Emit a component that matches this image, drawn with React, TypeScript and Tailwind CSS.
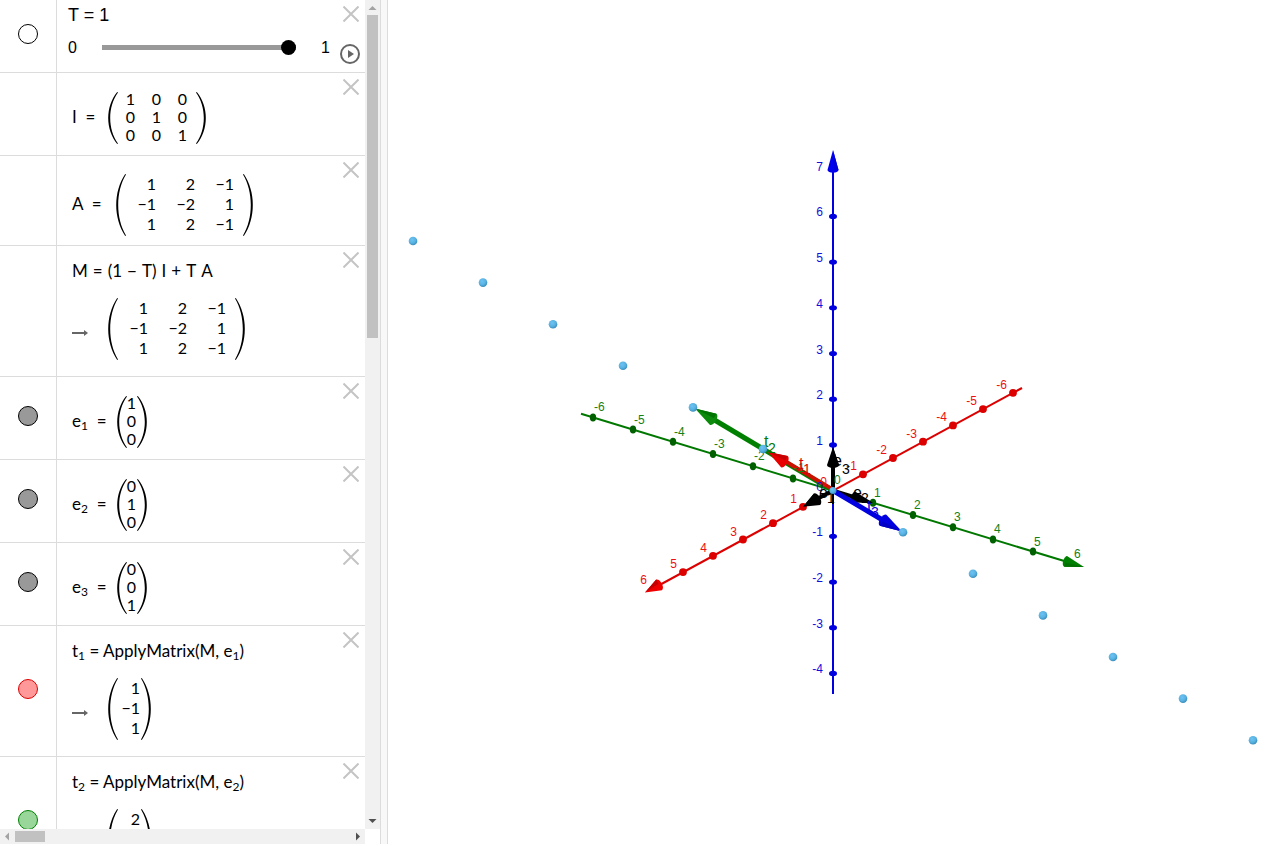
import React from "react";

const ParenLeft = () => (
  <svg
    className="w-[10px] self-stretch"
    viewBox="0 0 10 60"
    preserveAspectRatio="none"
    aria-hidden="true"
  >
    <path d="M9.2 0 C-2.8 17 -2.8 43 9.2 60 L10 59.4 C-0.4 43 -0.4 17 10 0.6 Z" />
  </svg>
);

const ParenRight = () => (
  <svg
    className="w-[10px] self-stretch"
    viewBox="0 0 10 60"
    preserveAspectRatio="none"
    aria-hidden="true"
  >
    <path d="M0.8 0 C12.8 17 12.8 43 0.8 60 L0 59.4 C10.4 43 10.4 17 0 0.6 Z" />
  </svg>
);

const matrixStyles = {
  identity: "grid grid-cols-[8px_8px_8px] gap-x-[18px] px-[9px] pb-[2px] leading-[18px]",
  wide: "grid grid-cols-[21px_21px_21px] gap-x-[18px] px-[9px] pb-[2px] leading-[20px]",
  vector: "grid grid-cols-[8px] px-px pb-[2px] leading-[18px]",
  image: "grid grid-cols-[21px] px-px pb-[2px] leading-[20px]",
};

type MatrixProps = {
  kind: keyof typeof matrixStyles;
  cells: string[];
};

const Matrix = ({ kind, cells }: MatrixProps) => {
  const tall = kind === "wide" || kind === "image";
  return (
    <div
      className={
        tall
          ? "flex h-[62px] items-center text-[16px]"
          : "flex h-[52px] items-center text-[16px]"
      }
    >
      <ParenLeft />
      <div className={matrixStyles[kind]}>
        {cells.map((cell, i) => (
          <span key={i} className="flex justify-end whitespace-nowrap">
            {cell}
          </span>
        ))}
      </div>
      <ParenRight />
    </div>
  );
};

const Sub = ({ children }: { children: React.ReactNode }) => (
  <sub className="text-[12px]">{children}</sub>
);

const Arrow = () => (
  <svg className="mt-2 h-[8px] w-[16px]" viewBox="0 0 16 8" aria-hidden="true">
    <path d="M0 4H13" stroke="#666" strokeWidth="2" />
    <path d="M12 1L16 4L12 7Z" fill="#666" />
  </svg>
);

type RowProps = {
  name: string;
  height: string;
  marker?: string;
  action?: React.ReactNode;
  children: React.ReactNode;
};

const Row = ({ name, height, marker, action, children }: RowProps) => (
  <li className={`flex shrink-0 border-b border-[#dcdcdc] ${height}`}>
    <div className="flex w-[57px] shrink-0 items-center justify-center border-r border-[#dcdcdc] pb-1">
      {marker && (
        <button
          type="button"
          aria-label={`Show or hide ${name}`}
          className={`size-5 rounded-full border ${marker}`}
        />
      )}
    </div>
    <div className="min-w-0 flex-1">{children}</div>
    <div className="flex w-6 shrink-0 flex-col items-center gap-[22px] pt-[6px] pr-1">
      <button type="button" aria-label={`Delete ${name}`}>
        <svg className="block size-4" viewBox="0 0 16 16" aria-hidden="true">
          <path d="M0.5 0.5L15.5 15.5M15.5 0.5L0.5 15.5" stroke="#c4c4c4" strokeWidth="2" />
        </svg>
      </button>
      {action}
    </div>
  </li>
);

const Play = () => (
  <button type="button" aria-label="Play">
    <svg className="block h-5 w-[22px]" viewBox="1 0 22 20" aria-hidden="true">
      <circle cx="11" cy="10" r="9" fill="none" stroke="#666" strokeWidth="2" />
      <path d="M9 6L15 10L9 14Z" fill="#666" />
    </svg>
  </button>
);

const greyMarker = "border-black bg-[#999999]";

const unitVectors = [
  { index: "1", cells: ["1", "0", "0"] },
  { index: "2", cells: ["0", "1", "0"] },
  { index: "3", cells: ["0", "0", "1"] },
];

const imageVectors = [
  { index: "1", marker: "border-[#dd0000] bg-[#ff9999]", cells: ["1", "−1", "1"] },
  { index: "2", marker: "border-[#008000] bg-[#99d699]", cells: ["2", "−2", "2"] },
];

const matrixA = ["1", "2", "−1", "−1", "−2", "1", "1", "2", "−1"];

const AlgebraList = () => (
  <ul className="flex min-h-0 min-w-0 flex-1 flex-col overflow-hidden font-['Lato',sans-serif] text-[17px]">
    <Row name="T" height="h-[73px]" marker="border-black bg-white" action={<Play />}>
      <div className="pl-[11px] font-['Liberation_Sans',sans-serif]">
        <label htmlFor="slider-t" className="block pt-1 text-[18px] leading-[22px]">
          T = 1
        </label>
        <div className="flex items-center pt-[11px] text-[16px] leading-[21px]">
          <span className="w-[34px]">0</span>
          <input
            id="slider-t"
            type="range"
            min={0}
            max={1}
            step={0.01}
            defaultValue={1}
            className="h-[5px] min-w-0 flex-1 appearance-none bg-[#999999] [&::-webkit-slider-thumb]:size-[15px] [&::-webkit-slider-thumb]:appearance-none [&::-webkit-slider-thumb]:rounded-full [&::-webkit-slider-thumb]:bg-black"
          />
          <span className="w-[45px] pr-[11px] text-right">1</span>
        </div>
      </div>
    </Row>
    <Row name="I" height="h-[83px]">
      <div className="flex items-center pt-[19px] pl-[15px]">
        <span className="w-9 pb-[2px]">I&nbsp; =</span>
        <Matrix kind="identity" cells={["1", "0", "0", "0", "1", "0", "0", "0", "1"]} />
      </div>
    </Row>
    <Row name="A" height="h-[90px]">
      <div className="flex items-center pt-[18px] pl-[15px]">
        <span className="w-11 pb-[2px]">A&nbsp; =</span>
        <Matrix kind="wide" cells={matrixA} />
      </div>
    </Row>
    <Row name="M" height="h-[131px]">
      <div className="pt-[15px] pl-[15px]">
        <p className="flex gap-[5px] leading-[20px]">
          <span>M</span>
          <span>=</span>
          <span>(1</span>
          <span>−</span>
          <span>T)</span>
          <span>I</span>
          <span>+</span>
          <span>T</span>
          <span>A</span>
        </p>
        <div className="flex items-center gap-5 pt-[17px]">
          <Arrow />
          <Matrix kind="wide" cells={matrixA} />
        </div>
      </div>
    </Row>
    {unitVectors.map(({ index, cells }) => (
      <Row key={index} name={`e${index}`} height="h-[83px]" marker={greyMarker}>
        <div className="flex items-center pt-[19px] pl-[15px]">
          <span className="w-[45px] pb-[2px]">
            e<Sub>{index}</Sub>&nbsp; =
          </span>
          <Matrix kind="vector" cells={cells} />
        </div>
      </Row>
    ))}
    {imageVectors.map(({ index, marker, cells }) => (
      <Row key={index} name={`t${index}`} height="h-[131px]" marker={marker}>
        <div className="pt-[15px] pl-[15px]">
          <p className="leading-[20px]">
            t<Sub>{index}</Sub> = ApplyMatrix(M, e<Sub>{index}</Sub>)
          </p>
          <div className="flex items-center gap-5 pt-[17px]">
            <Arrow />
            <Matrix kind="image" cells={cells} />
          </div>
        </div>
      </Row>
    ))}
  </ul>
);

const VerticalBar = () => (
  <div className="flex w-[15px] shrink-0 flex-col items-center bg-[#f1f1f1]">
    <svg className="size-[15px]" viewBox="0 0 15 15" aria-hidden="true">
      <path d="M3.5 10L7.5 6L11.5 10Z" fill="#a3a3a3" />
    </svg>
    <div className="h-[39%] w-[11px] bg-[#c1c1c1]" />
    <svg className="mt-auto size-[15px]" viewBox="0 0 15 15" aria-hidden="true">
      <path d="M3.5 5L7.5 9L11.5 5Z" fill="#505050" />
    </svg>
  </div>
);

const HorizontalBar = () => (
  <div className="mr-[15px] flex h-[15px] shrink-0 items-center bg-[#f1f1f1]">
    <svg className="size-[15px]" viewBox="0 0 15 15" aria-hidden="true">
      <path d="M9 3.5L5 7.5L9 11.5Z" fill="#a3a3a3" />
    </svg>
    <div className="h-[11px] w-[30px] bg-[#c1c1c1]" />
    <svg className="ml-auto size-[15px]" viewBox="0 0 15 15" aria-hidden="true">
      <path d="M6 3.5L10 7.5L6 11.5Z" fill="#505050" />
    </svg>
  </div>
);

// Projection of the space onto the view
const origin = { x: 833, y: 490.6 };
const project = (x: number, y: number, z: number) => ({
  x: origin.x - 30 * x + 40 * y,
  y: origin.y + 16.3 * x + 12.2 * y - 45.7 * z,
});

const range = (from: number, to: number) =>
  Array.from({ length: to - from + 1 }, (_, i) => from + i).filter((n) => n !== 0);

type ConeProps = {
  x: number;
  y: number;
  angle: number;
  length: number;
  half: number;
  fill: string;
  shade: string;
};

const Cone = ({ x, y, angle, length, half, fill, shade }: ConeProps) => (
  <g transform={`translate(${x} ${y}) rotate(${angle})`}>
    <path
      d={`M0 0L${-length} ${-half}A${half * 0.5} ${half} 0 0 0 ${-length} ${half}Z`}
      fill={fill}
    />
    <path d={`M0 0L${-length} ${half * 0.2}L${-length} ${half}Z`} fill={shade} />
  </g>
);

const Graphics3D = () => (
  <svg
    className="h-full w-full"
    viewBox="388 0 892 844"
    fontFamily="Liberation Sans, sans-serif"
    fontSize="12"
    role="img"
    aria-label="3D view"
  >
    <defs>
      <radialGradient id="ball" cx="0.4" cy="0.35" r="0.65">
        <stop offset="0" stopColor="#6cc4f4" />
        <stop offset="0.6" stopColor="#58b2e2" />
        <stop offset="1" stopColor="#3d8fbd" />
      </radialGradient>
    </defs>

    {/* axes */}
    <path d="M1022 388L655 587.5" stroke="#dc0000" strokeWidth="2" />
    <path d="M581 413.8L1070 562.8" stroke="#007800" strokeWidth="2" />
    <path d="M833 694V168" stroke="#0000e0" strokeWidth="2" />
    {range(-6, 5).map((n) => {
      const p = project(n, 0, 0);
      return <circle key={n} cx={p.x} cy={p.y} r="3.9" fill="#dc0000" />;
    })}
    {range(-6, 5).map((n) => {
      const p = project(0, n, 0);
      return <ellipse key={n} cx={p.x} cy={p.y} rx="3.2" ry="4" fill="#006000" />;
    })}
    {range(-4, 6).map((n) => {
      const p = project(0, 0, n);
      return <ellipse key={n} cx={p.x} cy={p.y} rx="4" ry="2.6" fill="#0000e0" />;
    })}
    <Cone x={645} y={592.5} angle={151.5} length={16} half={6} fill="#ee0000" shade="#c40000" />
    <Cone x={1084} y={567} angle={17} length={19} half={5.5} fill="#008000" shade="#007000" />
    <Cone x={833} y={150} angle={-90} length={20} half={5.5} fill="#0000ee" shade="#0000dc" />

    {/* unit vectors */}
    <path d="M833 490.6L817 499" stroke="#000" strokeWidth="4" />
    <path d="M833 490.6L857 498" stroke="#000" strokeWidth="4" />
    <path d="M833 504V490" stroke="#000" strokeWidth="2" />
    <path d="M833 492V464" stroke="#000" strokeWidth="4" />
    <Cone x={803} y={506.8} angle={151.5} length={16} half={6.5} fill="#000" shade="#000" />
    <Cone x={873} y={502.8} angle={17} length={20} half={5.5} fill="#000" shade="#000" />
    <Cone x={833} y={447} angle={-90} length={18} half={6} fill="#000" shade="#000" />

    {/* images of the unit vectors */}
    <path d="M833 490.6L712 418.5" stroke="#008000" strokeWidth="5" />
    <Cone x={695} y={408.5} angle={210.7} length={21} half={6.5} fill="#0b8a0b" shade="#007400" />
    <path d="M833 489.6L784 460.5" stroke="#cc1100" strokeWidth="4" />
    <Cone x={768} y={452} angle={210.7} length={19} half={6.5} fill="#e80000" shade="#c80000" />
    <path d="M833 490.6L886 522" stroke="#0000e0" strokeWidth="5" />
    <Cone x={902} y={531.5} angle={30.7} length={22} half={6.5} fill="#0000e0" shade="#0000c4" />

    {/* axis numbers */}
    <g fill="#ee1010" textAnchor="end">
      {range(-6, 6).map((n) => {
        const p = project(n, 0, 0);
        return (
          <text key={n} x={p.x - 6} y={p.y - 4}>
            {n}
          </text>
        );
      })}
      <text x="827" y="486">0</text>
    </g>
    <g fill="#158015">
      {range(-6, 6).map((n) => {
        const p = project(0, n, 0);
        return (
          <text key={n} x={p.x + 1} y={p.y - 6}>
            {n}
          </text>
        );
      })}
      <text x="834" y="484">0</text>
    </g>
    <g fill="#1010dd" textAnchor="end">
      {range(-4, 7).map((n) => {
        const p = project(0, 0, n);
        return (
          <text key={n} x={p.x - 10} y={p.y}>
            {n}
          </text>
        );
      })}
      <text x="823" y="491">0</text>
    </g>

    {/* vector names */}
    <g fontSize="16">
      <text x="819" y="498">e</text>
      <text x="827" y="503" fontSize="14">1</text>
      <text x="853" y="498">e</text>
      <text x="861" y="503" fontSize="14">2</text>
      <text x="833" y="466">e</text>
      <text x="842" y="474" fontSize="14">3</text>
      <g fill="#dc0000">
        <text x="799" y="469">t</text>
        <text x="803" y="474" fontSize="14">1</text>
      </g>
      <g fill="#007800">
        <text x="764" y="447">t</text>
        <text x="768" y="453" fontSize="14">2</text>
      </g>
      <g fill="#0000dc">
        <text x="867" y="512">t</text>
        <text x="871" y="517" fontSize="14">3</text>
      </g>
    </g>

    {range(-6, 6).map((n) => (
      <circle key={n} cx={origin.x + 70 * n} cy={origin.y + 41.6 * n} r="4.3" fill="url(#ball)" />
    ))}
    <circle cx={origin.x} cy={origin.y} r="3.5" fill="url(#ball)" />
  </svg>
);

const App = () => {
  return (
    <main className="flex h-screen bg-white pb-[2px] text-black">
      <section className="flex w-[380px] shrink-0 flex-col">
        <div className="flex min-h-0 flex-1">
          <AlgebraList />
          <VerticalBar />
        </div>
        <HorizontalBar />
      </section>
      <div className="w-2 shrink-0 border-x border-[#dcdcdc] bg-[#f8f8f8]" />
      <section className="min-w-0 flex-1">
        <Graphics3D />
      </section>
    </main>
  );
};

export default App;
